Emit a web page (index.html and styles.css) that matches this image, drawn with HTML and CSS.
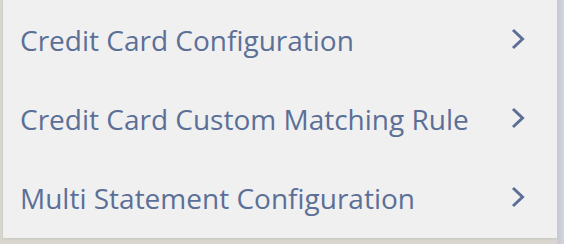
FILE: index.html
```html
<!DOCTYPE html>
<html>
<head>
<meta charset="utf-8">
<link rel="stylesheet" href="styles.css">
</head>
<body>
<div class="stage">
  <ul class="menu">
    <li class="item"><span class="label">Credit Card Configuration</span><svg class="chev" viewBox="0 0 14 22" width="14" height="22"><path d="M2 2 L11.5 11 L2 20" fill="none" stroke="currentColor" stroke-width="3"/></svg></li>
    <li class="item"><span class="label">Credit Card Custom Matching Rule</span><svg class="chev" viewBox="0 0 14 22" width="14" height="22"><path d="M2 2 L11.5 11 L2 20" fill="none" stroke="currentColor" stroke-width="3"/></svg></li>
    <li class="item"><span class="label">Multi Statement Configuration</span><svg class="chev" viewBox="0 0 14 22" width="14" height="22"><path d="M2 2 L11.5 11 L2 20" fill="none" stroke="currentColor" stroke-width="3"/></svg></li>
  </ul>
</div>
</body>
</html>
```
FILE: styles.css
```css
html, body {
  margin: 0;
  padding: 0;
}
body {
  width: 564px;
  height: 244px;
  overflow: hidden;
  background: linear-gradient(to right, #d8d6cf 0, #d8d6cf 557px, #c6cad3 558px, #d3d6dc 564px);
  font-family: "Open Sans", "Noto Sans", sans-serif;
}
.stage {
  padding: 0 0 0 3px;
}
.menu {
  list-style: none;
  margin: 0;
  padding: 0 0 1px 0;
  width: 554px;
  background: #f0f0f0;
  box-shadow: 0 1px 2px rgba(0,0,0,0.08);
}
.item {
  height: 79px;
  display: flex;
  align-items: center;
  justify-content: space-between;
  padding: 0 32px 0 17px;
  color: #5b6f97;
  font-size: 28px;
}
.label {
  line-height: 1;
}
.chev {
  display: block;
  flex: none;
  margin-top: -1px;
}
```
